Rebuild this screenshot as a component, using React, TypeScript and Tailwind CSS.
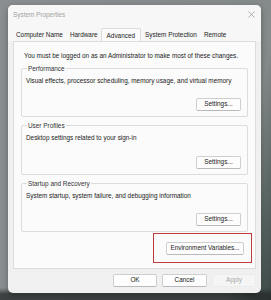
import React from "react";

const font = { fontFamily: '"Segoe UI", "Liberation Sans", Arial, sans-serif' };

function Btn({ label, w, disabled }: { label: string; w: string; disabled?: boolean }) {
  return (
    <div
      className={`${w} h-[13px] flex items-center justify-center rounded-[2px] text-[6.4px] leading-none ${
        disabled
          ? "bg-[#f5f5f5] text-[#a8a8a8] border border-[#ececec]"
          : "bg-[#fdfdfd] text-[#222] border border-[#cfcfcf] border-b-[#b9b9b9]"
      }`}
    >
      {label}
    </div>
  );
}

function Group({ title, desc, h }: { title: string; desc: string; h: string }) {
  return (
    <div className={`${h} border border-[#dcdcdc] rounded-[2px] mx-[7px] px-[4px] flex flex-col`}>
      <span className="self-start mt-[-5px] h-[9px] ml-[1px] px-[1px] bg-[#fbfbfb] text-[6.4px] leading-[9px] text-[#333]">
        {title}
      </span>
      <div className="text-[6.4px] leading-[9px] text-[#222] mt-[3px] whitespace-nowrap">{desc}</div>
      <div className="flex justify-end mt-auto mb-[5px] mr-[2px]">
        <Btn label="Settings..." w="w-[45px]" />
      </div>
    </div>
  );
}

export default function App() {
  return (
    <div
      className="relative w-[271px] h-[300px] overflow-hidden pt-[5px] pl-[8px] bg-[linear-gradient(to_bottom,rgba(0,0,0,0)_96%,rgba(35,40,40,0.75)_98%),linear-gradient(100deg,#8a8e90_0%,#858a8b_86%,#5b6764_93%,#3b4746_100%)]"
      style={font}
    >
      <div className="relative w-[253px] h-[288px] bg-[#f0f0f0] rounded-[5px] shadow-[0_2px_6px_rgba(0,0,0,0.3)] flex flex-col overflow-hidden">
        {/* title bar */}
        <div className="h-[19px] flex items-center justify-between pl-[5px] pr-[5px] bg-[#f7f7f7]">
          <span className="text-[6.4px] text-[#a3a3a3]">System Properties</span>
          <svg width="7" height="7" viewBox="0 0 7 7" className="mr-[1px]">
            <path d="M0.5 0.5 L6.5 6.5 M6.5 0.5 L0.5 6.5" stroke="#9a9a9a" strokeWidth="0.8" />
          </svg>
        </div>
        {/* tabs */}
        <div className="flex items-end h-[17px] pl-[5px] bg-[#f7f7f7]">
          <div className="flex items-center h-[13px] text-[6.4px] text-[#222]">
            <span className="pl-[3px] pr-[7px]">Computer Name</span>
            <span className="pr-[3px]">Hardware</span>
            <span className="h-[14px] mb-[-1px] flex items-center px-[5px] bg-[#fbfbfb] border border-[#dcdcdc] border-b-0 rounded-t-[2px]">
              Advanced
            </span>
            <span className="pl-[4px] pr-[7px]">System Protection</span>
            <span>Remote</span>
          </div>
        </div>
        {/* panel */}
        <div className="mx-[5px] h-[228px] bg-[#fbfbfb] border border-[#dcdcdc] flex flex-col">
          <div className="text-[6.4px] leading-[9px] text-[#222] pl-[10px] mt-[9px] whitespace-nowrap">
            You must be logged on as an Administrator to make most of these changes.
          </div>
          <div className="mt-[8px] flex flex-col gap-[8px]">
            <Group h="h-[49px]" title="Performance" desc="Visual effects, processor scheduling, memory usage, and virtual memory" />
            <Group h="h-[50px]" title="User Profiles" desc="Desktop settings related to your sign-in" />
            <Group h="h-[49px]" title="Startup and Recovery" desc="System startup, system failure, and debugging information" />
          </div>
          <div className="flex justify-end mr-[3px] mt-[1px]">
            <div className="w-[99px] h-[30px] border-[1.5px] border-[#c0393b] flex items-center justify-end pr-[7px]">
              <Btn label="Environment Variables..." w="w-[78px]" />
            </div>
          </div>
        </div>
        {/* footer */}
        <div className="flex-1 flex items-center justify-end gap-[5px] pr-[5px] pb-[1px]">
          <Btn label="OK" w="w-[44px]" />
          <Btn label="Cancel" w="w-[45px]" />
          <Btn label="Apply" w="w-[44px]" disabled />
        </div>
      </div>
    </div>
  );
}
